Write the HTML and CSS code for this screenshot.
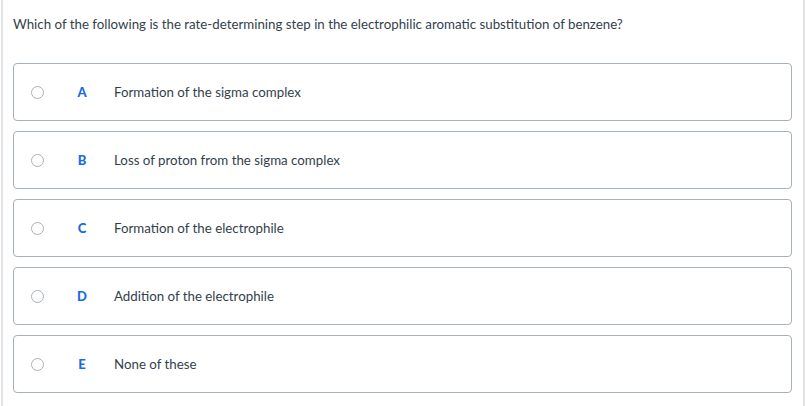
FILE: index.html
```html
<!DOCTYPE html>
<html>
<head>
<meta charset="utf-8">
<link rel="stylesheet" href="styles.css">
</head>
<body>
<div class="frame">
  <p class="question">Which of the following is the rate-determining step in the electrophilic aromatic substitution of benzene?</p>
  <div class="options">
    <div class="option"><span class="radio"></span><span class="letter">A</span><span class="text">Formation of the sigma complex</span></div>
    <div class="option"><span class="radio"></span><span class="letter">B</span><span class="text">Loss of proton from the sigma complex</span></div>
    <div class="option"><span class="radio"></span><span class="letter">C</span><span class="text">Formation of the electrophile</span></div>
    <div class="option"><span class="radio"></span><span class="letter">D</span><span class="text">Addition of the electrophile</span></div>
    <div class="option"><span class="radio"></span><span class="letter">E</span><span class="text">None of these</span></div>
  </div>
</div>
</body>
</html>
```
FILE: styles.css
```css
html, body {
  margin: 0;
  padding: 0;
  background: #ffffff;
}
.frame {
  margin-left: 1px;
  width: 804px;
  height: 406px;
  border-left: 2px solid #e2e2e2;
  border-right: 2px solid #e2e2e2;
  padding: 0 0 0 10px;
  box-sizing: border-box;
  font-family: Lato, "Open Sans", sans-serif;
  color: #333f4d;
}
.question {
  margin: 0;
  padding-top: 15px;
  font-size: 13.3px;
  line-height: 18px;
  height: 48px;
}
.options {
  display: flex;
  flex-direction: column;
  gap: 10px;
  width: 779px;
}
.option {
  height: 56px;
  border: 1px solid #a7b1ba;
  border-radius: 4px;
  display: flex;
  align-items: center;
  font-size: 13.3px;
}
.radio {
  width: 11px;
  height: 11px;
  border: 1.5px solid #a9b1b9;
  border-radius: 50%;
  margin-left: 17px;
  flex: none;
}
.letter {
  width: 10px;
  margin-left: 33px;
  color: #1a6ae0;
  font-weight: 900;
  font-size: 13px;
  text-align: center;
}
.text {
  margin-left: 27px;
}
```
